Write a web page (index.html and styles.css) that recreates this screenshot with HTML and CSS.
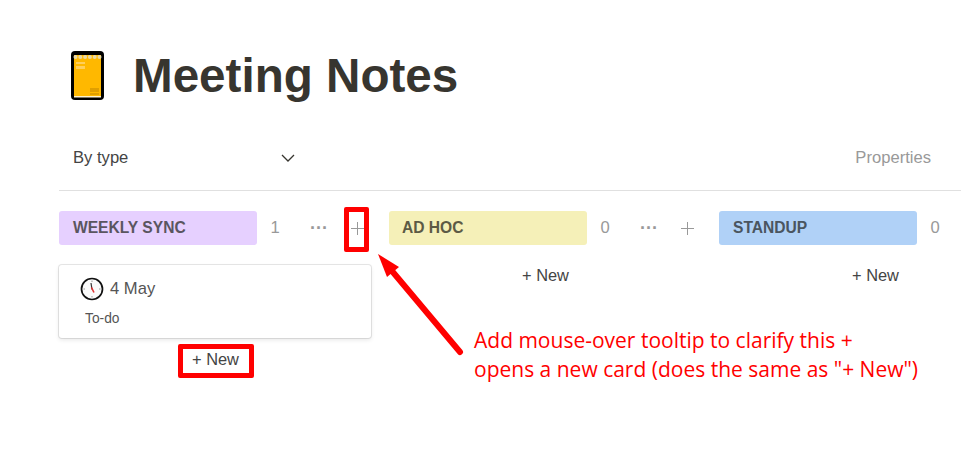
FILE: index.html
```html
<!DOCTYPE html>
<html lang="en">
<head>
  <meta charset="UTF-8"/>
  <title>Meeting Notes</title>
  <link rel="stylesheet" href="styles.css">
</head>
<body>
  <div class="page">
    <div class="title-row">
      <svg class="page-icon" width="33" height="50" viewBox="0 0 33 50">
        <rect x="0" y="0" width="33" height="49" rx="4" fill="#000"/>
        <rect x="3" y="4" width="27" height="41" fill="#ffb800"/>
        <rect x="3" y="45" width="27" height="1.500" fill="#fff2cc"/>
        <g fill="#e8d9a8">
          <circle cx="4.500" cy="6" r="2"/><circle cx="9.300" cy="6" r="2"/><circle cx="14.100" cy="6" r="2"/>
          <circle cx="18.900" cy="6" r="2"/><circle cx="23.700" cy="6" r="2"/><circle cx="28.500" cy="6" r="2"/>
        </g>
        <rect x="5" y="11" width="9" height="2" fill="#ffcf5c"/>
        <rect x="5" y="15" width="9" height="3" fill="#ffcf5c"/>
        <rect x="19" y="37" width="9" height="4" fill="#e09f00"/>
        <rect x="19" y="42" width="9" height="2" fill="#e09f00"/>
      </svg>
      <h1>Meeting Notes</h1>
    </div>

    <div class="toolbar">
      <div class="group-by">
        <span>By type</span>
        <svg width="14" height="8" viewBox="0 0 14 8"><path d="M1 1l6 6 6-6" fill="none" stroke="#37352f" stroke-width="1.300"/></svg>
      </div>
      <span class="properties">Properties</span>
    </div>

    <div class="board">
      <div class="column">
        <div class="column-head">
          <div class="pill pill-purple">WEEKLY SYNC</div>
          <span class="count">1</span>
          <span class="dots">···</span>
          <svg class="plus" width="13" height="13" viewBox="0 0 13 13"><path d="M6.500 0v13M0 6.500h13" stroke="#999" stroke-width="1"/></svg>
        </div>
        <div class="card">
          <div class="card-title">
            <svg width="24" height="24" viewBox="0 0 24 24">
              <circle cx="12" cy="12" r="10.500" fill="#fafafa" stroke="#111" stroke-width="1.700"/>
              <path d="M12 3.500v1.500M12 19v1.500M3.500 12H5M19 12h1.500" stroke="#999" stroke-width="1"/>
              <path d="M11 6l1 6.500" stroke="#333" stroke-width="1.200"/>
              <path d="M11.500 10.500l2.500 5" stroke="#e03030" stroke-width="1.600"/>
            </svg>
            <span>4 May</span>
          </div>
          <div class="card-prop">To-do</div>
        </div>
        <div class="new new-under">+ New</div>
      </div>

      <div class="column">
        <div class="column-head">
          <div class="pill pill-yellow">AD HOC</div>
          <span class="count">0</span>
          <span class="dots">···</span>
          <svg class="plus" width="13" height="13" viewBox="0 0 13 13"><path d="M6.500 0v13M0 6.500h13" stroke="#999" stroke-width="1"/></svg>
        </div>
        <div class="new">+ New</div>
      </div>

      <div class="column">
        <div class="column-head">
          <div class="pill pill-blue">STANDUP</div>
          <span class="count">0</span>
        </div>
        <div class="new">+ New</div>
      </div>
    </div>

    <!-- annotations drawn over the screenshot -->
    <div class="mark mark-plus"></div>
    <div class="mark mark-new"></div>
    <svg class="arrow" width="961" height="452" viewBox="0 0 961 452">
      <path d="M460 352L392 271" stroke="#f00" stroke-width="6" stroke-linecap="round"/>
      <path d="M378 254l9 23 12-10z" fill="#f00"/>
    </svg>
    <div class="note">Add mouse-over tooltip to clarify this +<br>opens a new card (does the same as "+ New")</div>
  </div>
</body>
</html>
```

FILE: styles.css
```css
* { box-sizing:border-box; }
html, body { margin:0; background:#fff; }
body { font-family:"Liberation Sans", Arial, sans-serif; color:#37352f; }
.page { position:relative; width:961px; height:452px; overflow:hidden; padding:46px 0 0 59px; }

.title-row { display:flex; align-items:center; height:60px; }
.page-icon { margin:0 0 0 12px; flex:none; }
h1 { margin:0 0 0 29px; font-size:47.6px; font-weight:700; line-height:60px; color:#37352f; }

.toolbar {
  display:flex; justify-content:space-between; align-items:center;
  height:59px; margin-top:26px; padding:0 30px 6px 14px;
  border-bottom:1px solid #e0e0e0;
}
.group-by { display:flex; align-items:center; width:222px; justify-content:space-between; font-size:16.6px; color:#444; }
.properties { font-size:16.6px; color:#999; }

.board { display:flex; margin-top:20px; }
.column { flex:none; width:330px; }
.column-head { display:flex; align-items:center; height:34px; }
.pill {
  flex:none; width:198px; height:34px; padding-left:14px;
  border-radius:3px; font-size:15.6px; font-weight:700; line-height:33px; color:#5a5560;
}
.pill-purple { background:#e6d0ff; }
.pill-yellow { background:#f5f0b8; color:#5c5a45; padding-left:13px; }
.pill-blue { background:#b0d1f7; color:#4a5560; }
.count { width:36px; text-align:center; font-size:16.6px; color:#999; }
.dots { width:36px; margin-left:8px; text-align:center; font-size:18px; font-weight:700; color:#999; }
.plus { flex:none; margin-left:14px; }

.card {
  width:312px; height:73px; margin-top:20px; padding:12px 0 0 21px;
  background:#fff; border-radius:3px;
  box-shadow:0 0 0 1px rgba(15,15,15,.1), 0 2px 4px rgba(15,15,15,.1);
}
.card-title { display:flex; align-items:center; gap:6px; font-size:16.6px; color:#555; }
.card-prop { margin:10px 0 0 5px; font-size:13.8px; color:#555; }

.new { width:313px; margin-top:21px; text-align:center; font-size:16.4px; line-height:18px; color:#444; }
.new-under { margin-top:12px; }

.mark { position:absolute; border:5px solid #f00; border-radius:2px; }
.mark-plus { left:344px; top:207px; width:25px; height:45px; }
.mark-new { left:178px; top:344px; width:76px; height:34px; }
.arrow { position:absolute; left:0; top:0; }
.note {
  position:absolute; left:474px; top:326px;
  font-family:"Open Sans", sans-serif; font-size:21px; line-height:29px; color:#f00; white-space:nowrap;
}
```
